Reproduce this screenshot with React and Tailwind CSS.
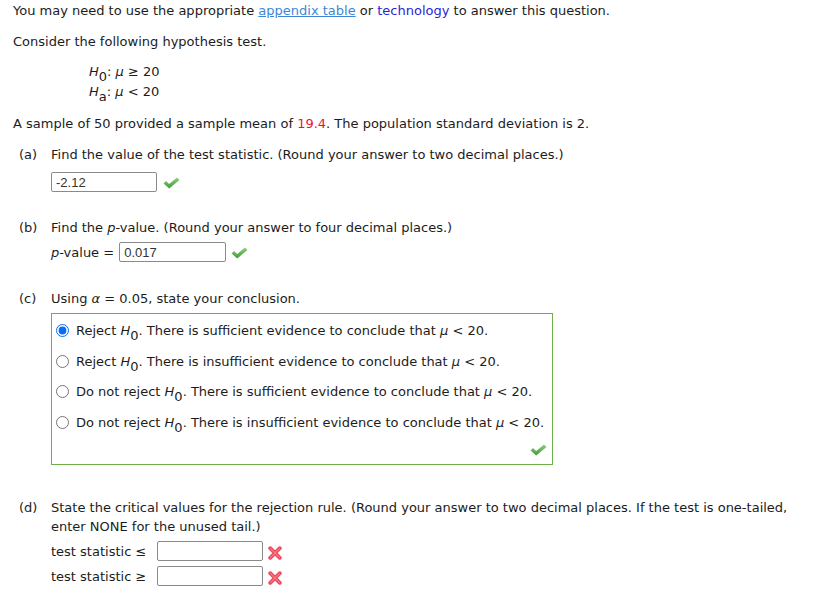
import * as React from "react"

const font = { fontFamily: '"DejaVu Sans", Verdana, sans-serif' }

function Check({ className = "" }) {
  return (
    <svg width="17" height="12" viewBox="0 0 17 12" className={className}>
      <defs>
        <linearGradient id="ck" x1="0" y1="0" x2="0" y2="1">
          <stop offset="0" stopColor="#8fd17a" />
          <stop offset="1" stopColor="#3f9a3a" />
        </linearGradient>
      </defs>
      <path d="M0.5 6.5 L3 4 L6.2 7 L14 0.5 L16.5 3 L6.2 11.5 Z" fill="url(#ck)" />
    </svg>
  )
}

function Cross() {
  return (
    <svg width="14" height="14" viewBox="0 0 14 14">
      <path d="M2.2 2.2 L11.8 11.8 M11.8 2.2 L2.2 11.8" stroke="#f04a5c" strokeWidth="3.8" strokeLinecap="round" />
      <path d="M2.6 2.6 L11.4 11.4 M11.4 2.6 L2.6 11.4" stroke="#f77a86" strokeWidth="1.2" strokeLinecap="round" />
    </svg>
  )
}

function H({ sub }) {
  return (
    <span>
      <i>H</i>
      <span className="relative top-[5px]">{sub}</span>
    </span>
  )
}

function Field({ value, width }) {
  return (
    <div
      className={`h-[20px] ${width} border border-[#8a8a8a] rounded-[2px] bg-white px-[4px] flex items-center text-[13px] text-[#333] leading-none`}
      style={{ fontFamily: '"Liberation Sans", Arial, sans-serif' }}
    >
      {value}
    </div>
  )
}

function Part({ label, children, className = "" }) {
  return (
    <div className={`flex ${className}`}>
      <div className="w-[38px] pl-[6px] shrink-0">{label}</div>
      <div className="flex-1">{children}</div>
    </div>
  )
}

const options = [
  ["Reject ", ". There is sufficient evidence to conclude that ", true],
  ["Reject ", ". There is insufficient evidence to conclude that ", false],
  ["Do not reject ", ". There is sufficient evidence to conclude that ", false],
  ["Do not reject ", ". There is insufficient evidence to conclude that ", false],
]

export default function App() {
  return (
    <div className="bg-white w-[827px] h-[593px] text-[13px] leading-[19px] text-[#1c1c1c] pl-[13px] pt-[1px]" style={font}>
      <p>
        You may need to use the appropriate{" "}
        <span className="text-[#3d87d6] underline">appendix table</span> or{" "}
        <span className="text-[#2a1fd6]">technology</span> to answer this question.
      </p>
      <p className="mt-[12px]">Consider the following hypothesis test.</p>
      <div className="mt-[11px] pl-[76px]">
        <div className="h-[20px]"><H sub="0" />: <i>μ</i> ≥ 20</div>
        <div className="h-[20px]"><H sub="a" />: <i>μ</i> &lt; 20</div>
      </div>
      <p className="mt-[12px]">
        A sample of 50 provided a sample mean of <span className="text-[#ee1133]">19.4</span>. The population standard deviation is 2.
      </p>

      <Part label="(a)" className="mt-[12px]">
        <p>Find the value of the test statistic. (Round your answer to two decimal places.)</p>
        <div className="mt-[8px] flex items-center gap-[6px]">
          <Field value="-2.12" width="w-[106px]" />
          <Check className="mt-[2px]" />
        </div>
      </Part>

      <Part label="(b)" className="mt-[26px]">
        <p>Find the <i>p</i>-value. (Round your answer to four decimal places.)</p>
        <div className="mt-[5px] flex items-center">
          <span className="mr-[5px]"><i>p</i>-value =</span>
          <Field value="0.017" width="w-[107px]" />
          <Check className="ml-[5px] mt-[2px]" />
        </div>
      </Part>

      <Part label="(c)" className="mt-[27px]">
        <p>Using <i>α</i> = 0.05, state your conclusion.</p>
        <div className="mt-[5px] w-[502px] h-[152px] border border-[#6fb04a] flex flex-col pt-[1px]">
          {options.map(([a, b, sel], i) => (
            <div key={i} className="h-[30.7px] flex items-center pl-[4px]">
              <input type="radio" checked={sel} readOnly className="w-[13px] h-[13px] m-0 accent-[#0a6cf0]" />
              <span className="ml-[7px]">
                {a}<H sub="0" />{b}<i>μ</i> &lt; 20.
              </span>
            </div>
          ))}
          <div className="flex justify-end pr-[5px] mt-[6px]">
            <Check />
          </div>
        </div>
      </Part>

      <Part label="(d)" className="mt-[33px]">
        <p className="pr-[20px]">
          State the critical values for the rejection rule. (Round your answer to two decimal places. If the test is one-tailed, enter NONE for the unused tail.)
        </p>
        <div className="mt-[5px] flex flex-col gap-[5px]">
          {["≤", "≥"].map((s) => (
            <div key={s} className="flex items-center">
              <span className="w-[106px]">test statistic {s}</span>
              <Field value="" width="w-[106px]" />
              <span className="ml-[5px] mt-[3px]"><Cross /></span>
            </div>
          ))}
        </div>
      </Part>
    </div>
  )
}
